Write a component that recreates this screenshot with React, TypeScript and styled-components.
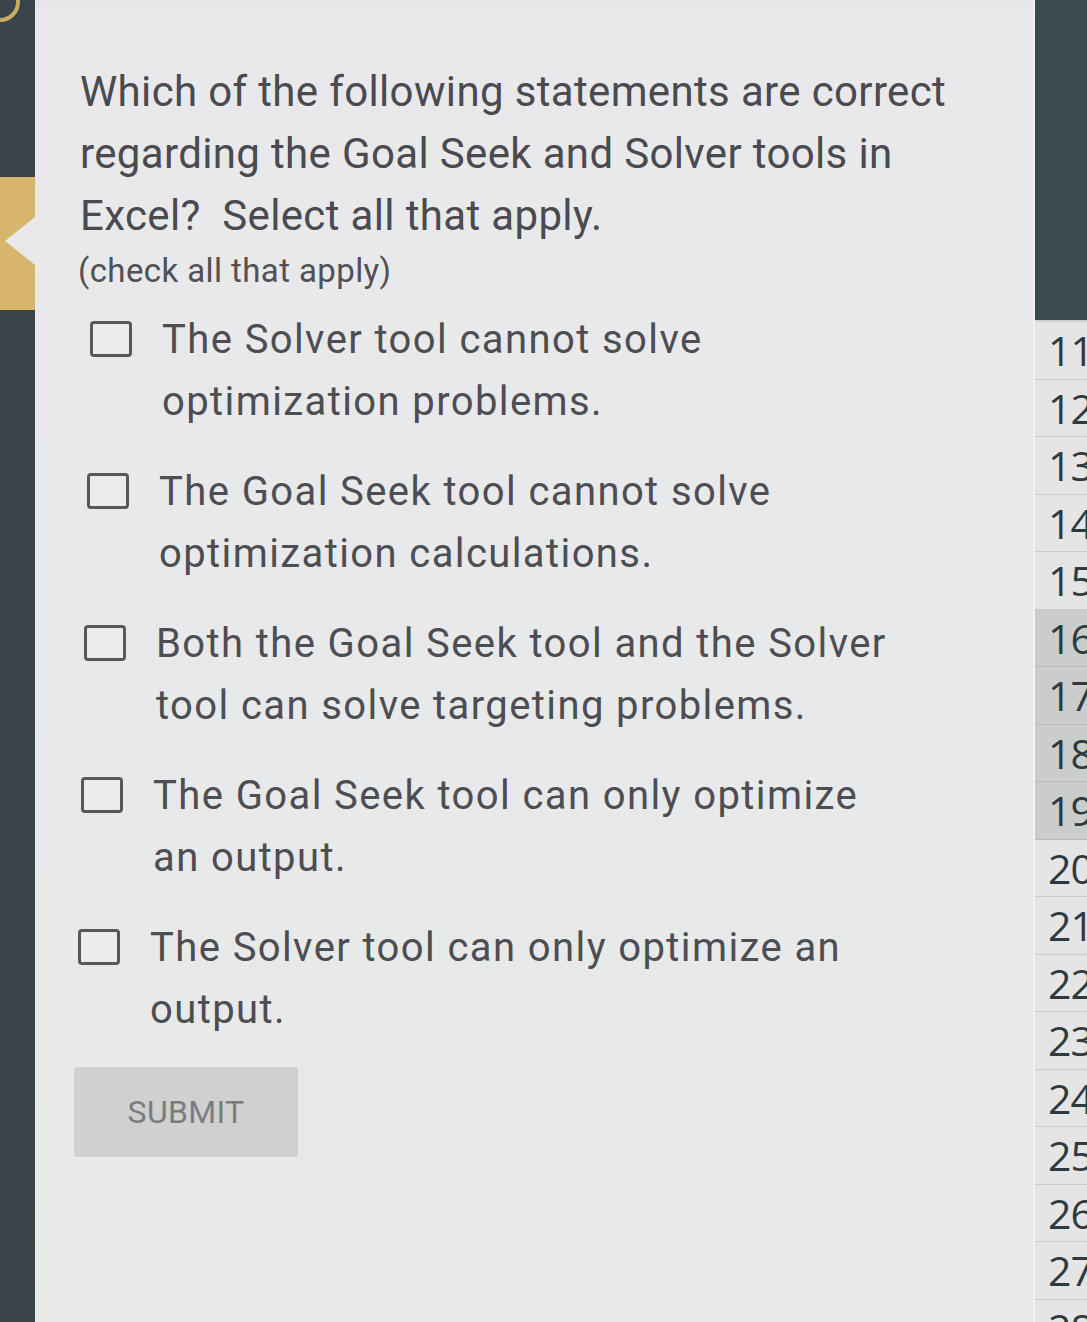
import React from "react";
import styled, { createGlobalStyle } from "styled-components";

const Global = createGlobalStyle`
  html, body { margin: 0; padding: 0; background: #3b464c; }
  #root { width: 1087px; height: 1322px; overflow: hidden; }
  * { box-sizing: border-box; }
`;

const Screen = styled.div`
  display: flex;
  width: 1087px;
  height: 1322px;
  overflow: hidden;
  background: #3b464c;
`;

const LeftRail = styled.div`
  width: 35px;
  flex: none;
  display: flex;
  flex-direction: column;
  background: #3a454b;
  position: relative;
`;

const Ring = styled.div`
  width: 40px;
  height: 40px;
  margin: -18px 0 0 -20px;
  border-radius: 50%;
  border: 4px solid #c9a95e;
  flex: none;
`;

const GoldBand = styled.div`
  margin-top: 155px;
  height: 133px;
  background: #d6b66c;
  position: relative;
  &::after {
    content: "";
    position: absolute;
    right: 0;
    top: 40px;
    width: 30px;
    height: 48px;
    background: #e9e9eb;
    clip-path: polygon(100% 0, 0 50%, 100% 100%);
  }
`;

const Card = styled.main`
  flex: 1;
  background: linear-gradient(#e5e5e7 0px, #e9e9eb 12px, #e8e9ea 60%, #e7e9e7 100%);
  padding: 61px 40px 0 45px;
  display: flex;
  flex-direction: column;
  font-family: Roboto, "Liberation Sans", sans-serif;
  color: #4a4a4f;
  border-right: 2px solid #f2f2f2;
`;

const Title = styled.h1`
  margin: 0;
  font-size: 42px;
  font-weight: 400;
  line-height: 62px;
  letter-spacing: 0.35px;
`;

const Hint = styled.p`
  margin: 2px 0 0 -2px;
  font-size: 33px;
  line-height: 44px;
  letter-spacing: 0.4px;
  color: #505055;
`;

const Options = styled.div`
  margin: 16px 0 0 10px;
  display: flex;
  flex-direction: column;
  gap: 28px;
`;

const Option = styled.label<{ $shift: number }>`
  display: flex;
  align-items: flex-start;
  gap: 30px;
  margin-left: ${(p) => p.$shift}px;
  cursor: pointer;
`;

const Box = styled.span`
  flex: none;
  width: 42px;
  height: 36px;
  margin-top: 12px;
  border: 3px solid #58585c;
  border-radius: 4px;
  background: #ececee;
`;

const OptionText = styled.span`
  font-size: 40px;
  line-height: 62px;
  letter-spacing: 1.4px;
  color: #4d4d52;
  max-width: 745px;
`;

const Submit = styled.button`
  margin: 26px 0 0 -6px;
  width: 224px;
  height: 90px;
  border: none;
  border-radius: 3px;
  background: #d0d0d1;
  color: #7c7c80;
  font-family: Roboto, "Liberation Sans", sans-serif;
  font-size: 32px;
  letter-spacing: 0.3px;
  align-self: flex-start;
`;

const RightRail = styled.aside`
  width: 52px;
  flex: none;
  display: flex;
  flex-direction: column;
  overflow: hidden;
  background: #e3e3e3;
`;

const DarkTop = styled.div`
  height: 322px;
  flex: none;
  background: #3c4a50;
  border-bottom: 2px solid #cfd2d2;
`;

const RowHead = styled.div<{ $sel: boolean }>`
  height: 57.5px;
  flex: none;
  display: flex;
  align-items: center;
  padding-left: 13px;
  white-space: nowrap;
  background: ${(p) => (p.$sel ? "#cbcccc" : "#e4e5e4")};
  border-bottom: 1px solid ${(p) => (p.$sel ? "#b8baba" : "#c9cbcb")};
  font-family: "Open Sans", "Liberation Sans", sans-serif;
  font-size: 41px;
  color: #2f3a3e;
  letter-spacing: -1px;
`;

const options = [
  "The Solver tool cannot solve optimization problems.",
  "The Goal Seek tool cannot solve optimization calculations.",
  "Both the Goal Seek tool and the Solver tool can solve targeting problems.",
  "The Goal Seek tool can only optimize an output.",
  "The Solver tool can only optimize an output.",
];

const rows = Array.from({ length: 18 }, (_, i) => 11 + i);

export default function App() {
  return (
    <>
      <Global />
      <Screen>
        <LeftRail>
          <Ring />
          <GoldBand />
        </LeftRail>
        <Card>
          <Title>
            Which of the following statements are correct regarding the Goal Seek and Solver tools in
            Excel?&nbsp; Select all that apply.
          </Title>
          <Hint>(check all that apply)</Hint>
          <Options>
            {options.map((o, i) => (
              <Option key={i} $shift={-i * 3}>
                <Box />
                <OptionText>{o}</OptionText>
              </Option>
            ))}
          </Options>
          <Submit>SUBMIT</Submit>
        </Card>
        <RightRail>
          <DarkTop />
          {rows.map((r) => (
            <RowHead key={r} $sel={r >= 16 && r <= 19}>
              {r}
            </RowHead>
          ))}
        </RightRail>
      </Screen>
    </>
  );
}
